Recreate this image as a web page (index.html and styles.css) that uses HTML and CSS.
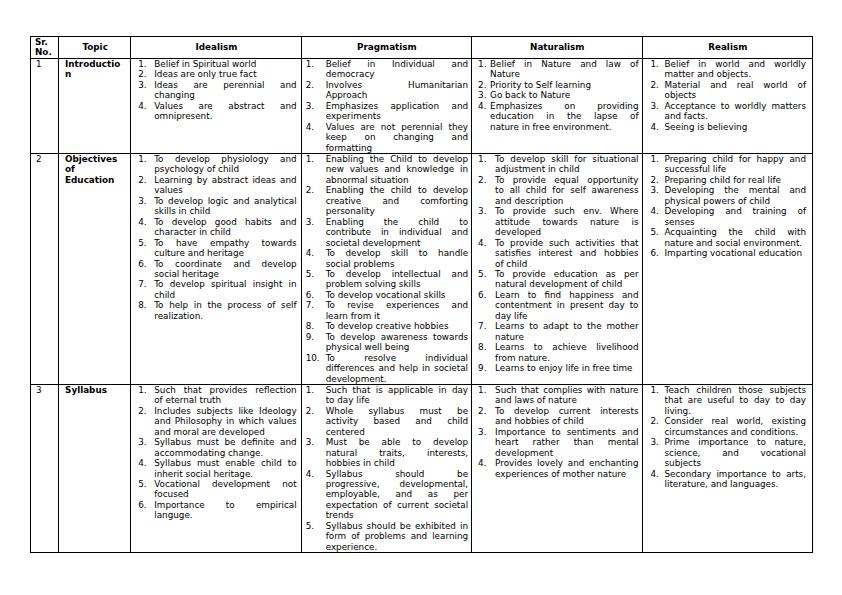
FILE: index.html
```html
<!DOCTYPE html>
<html>
<head>
<meta charset="utf-8">
<link rel="stylesheet" href="styles.css">
</head>
<body>
<table class="grid">
  <colgroup>
    <col class="c-sr"><col class="c-topic"><col class="c-main"><col class="c-main"><col class="c-main"><col class="c-main">
  </colgroup>
  <thead>
    <tr>
      <th class="h-sr">Sr.<br>No.</th>
      <th>Topic</th>
      <th>Idealism</th>
      <th>Pragmatism</th>
      <th>Naturalism</th>
      <th>Realism</th>
    </tr>
  </thead>
  <tbody>
    <tr>
      <td class="sr">1</td>
      <td class="topic">Introduction</td>
      <td class="ideal"><ol>
        <li><span class="n">1.</span><span class="t"><span class="l">Belief in Spiritual world</span></span></li>
        <li><span class="n">2.</span><span class="t"><span class="l">Ideas are only true fact</span></span></li>
        <li><span class="n">3.</span><span class="t"><span class="l">Ideas are perennial and</span><span class="l">changing</span></span></li>
        <li><span class="n">4.</span><span class="t"><span class="l">Values are abstract and</span><span class="l">omnipresent.</span></span></li>
      </ol></td>
      <td class="prag"><ol>
        <li><span class="n">1.</span><span class="t"><span class="l">Belief in Individual and</span><span class="l">democracy</span></span></li>
        <li><span class="n">2.</span><span class="t"><span class="l">Involves Humanitarian</span><span class="l">Approach</span></span></li>
        <li><span class="n">3.</span><span class="t"><span class="l">Emphasizes application and</span><span class="l">experiments</span></span></li>
        <li><span class="n">4.</span><span class="t"><span class="l">Values are not perennial they</span><span class="l">keep on changing and</span><span class="l">formatting</span></span></li>
      </ol></td>
      <td class="nat nat-narrow"><ol>
        <li><span class="n">1.</span><span class="t"><span class="l">Belief in Nature and law of</span><span class="l">Nature</span></span></li>
        <li><span class="n">2.</span><span class="t"><span class="l">Priority to Self learning</span></span></li>
        <li><span class="n">3.</span><span class="t"><span class="l">Go back to Nature</span></span></li>
        <li><span class="n">4.</span><span class="t"><span class="l">Emphasizes on providing</span><span class="l">education in the lapse of</span><span class="l">nature in free environment.</span></span></li>
      </ol></td>
      <td class="real"><ol>
        <li><span class="n">1.</span><span class="t"><span class="l">Belief in world and worldly</span><span class="l">matter and objects.</span></span></li>
        <li><span class="n">2.</span><span class="t"><span class="l">Material and real world of</span><span class="l">objects</span></span></li>
        <li><span class="n">3.</span><span class="t"><span class="l">Acceptance to worldly matters</span><span class="l">and facts.</span></span></li>
        <li><span class="n">4.</span><span class="t"><span class="l">Seeing is believing</span></span></li>
      </ol></td>
    </tr>
    <tr>
      <td class="sr">2</td>
      <td class="topic">Objectives of Education</td>
      <td class="ideal"><ol>
        <li><span class="n">1.</span><span class="t"><span class="l">To develop physiology and</span><span class="l">psychology of child</span></span></li>
        <li><span class="n">2.</span><span class="t"><span class="l">Learning by abstract ideas and</span><span class="l">values</span></span></li>
        <li><span class="n">3.</span><span class="t"><span class="l">To develop logic and analytical</span><span class="l">skills in child</span></span></li>
        <li><span class="n">4.</span><span class="t"><span class="l">To develop good habits and</span><span class="l">character in child</span></span></li>
        <li><span class="n">5.</span><span class="t"><span class="l">To have empathy towards</span><span class="l">culture and heritage</span></span></li>
        <li><span class="n">6.</span><span class="t"><span class="l">To coordinate and develop</span><span class="l">social heritage</span></span></li>
        <li><span class="n">7.</span><span class="t"><span class="l">To develop spiritual insight in</span><span class="l">child</span></span></li>
        <li><span class="n">8.</span><span class="t"><span class="l">To help in the process of self</span><span class="l">realization.</span></span></li>
      </ol></td>
      <td class="prag"><ol>
        <li><span class="n">1.</span><span class="t"><span class="l">Enabling the Child to develop</span><span class="l">new values and knowledge in</span><span class="l">abnormal situation</span></span></li>
        <li><span class="n">2.</span><span class="t"><span class="l">Enabling the child to develop</span><span class="l">creative and comforting</span><span class="l">personality</span></span></li>
        <li><span class="n">3.</span><span class="t"><span class="l">Enabling the child to</span><span class="l">contribute in individual and</span><span class="l">societal development</span></span></li>
        <li><span class="n">4.</span><span class="t"><span class="l">To develop skill to handle</span><span class="l">social problems</span></span></li>
        <li><span class="n">5.</span><span class="t"><span class="l">To develop intellectual and</span><span class="l">problem solving skills</span></span></li>
        <li><span class="n">6.</span><span class="t"><span class="l">To develop vocational skills</span></span></li>
        <li><span class="n">7.</span><span class="t"><span class="l">To revise experiences and</span><span class="l">learn from it</span></span></li>
        <li><span class="n">8.</span><span class="t"><span class="l">To develop creative hobbies</span></span></li>
        <li><span class="n">9.</span><span class="t"><span class="l">To develop awareness towards</span><span class="l">physical well being</span></span></li>
        <li><span class="n">10.</span><span class="t"><span class="l">To resolve individual</span><span class="l">differences and help in societal</span><span class="l">development.</span></span></li>
      </ol></td>
      <td class="nat"><ol>
        <li><span class="n">1.</span><span class="t"><span class="l">To develop skill for situational</span><span class="l">adjustment in child</span></span></li>
        <li><span class="n">2.</span><span class="t"><span class="l">To provide equal opportunity</span><span class="l">to all child for self awareness</span><span class="l">and description</span></span></li>
        <li><span class="n">3.</span><span class="t"><span class="l">To provide such env. Where</span><span class="l">attitude towards nature is</span><span class="l">developed</span></span></li>
        <li><span class="n">4.</span><span class="t"><span class="l">To provide such activities that</span><span class="l">satisfies interest and hobbies</span><span class="l">of child</span></span></li>
        <li><span class="n">5.</span><span class="t"><span class="l">To provide education as per</span><span class="l">natural development of child</span></span></li>
        <li><span class="n">6.</span><span class="t"><span class="l">Learn to find happiness and</span><span class="l">contentment in present day to</span><span class="l">day life</span></span></li>
        <li><span class="n">7.</span><span class="t"><span class="l">Learns to adapt to the mother</span><span class="l">nature</span></span></li>
        <li><span class="n">8.</span><span class="t"><span class="l">Learns to achieve livelihood</span><span class="l">from nature.</span></span></li>
        <li><span class="n">9.</span><span class="t"><span class="l">Learns to enjoy life in free time</span></span></li>
      </ol></td>
      <td class="real"><ol>
        <li><span class="n">1.</span><span class="t"><span class="l">Preparing child for happy and</span><span class="l">successful life</span></span></li>
        <li><span class="n">2.</span><span class="t"><span class="l">Preparing child for real life</span></span></li>
        <li><span class="n">3.</span><span class="t"><span class="l">Developing the mental and</span><span class="l">physical powers of child</span></span></li>
        <li><span class="n">4.</span><span class="t"><span class="l">Developing and training of</span><span class="l">senses</span></span></li>
        <li><span class="n">5.</span><span class="t"><span class="l">Acquainting the child with</span><span class="l">nature and social environment.</span></span></li>
        <li><span class="n">6.</span><span class="t"><span class="l">Imparting vocational education</span></span></li>
      </ol></td>
    </tr>
    <tr>
      <td class="sr">3</td>
      <td class="topic">Syllabus</td>
      <td class="ideal"><ol>
        <li><span class="n">1.</span><span class="t"><span class="l">Such that provides reflection</span><span class="l">of eternal truth</span></span></li>
        <li><span class="n">2.</span><span class="t"><span class="l">Includes subjects like Ideology</span><span class="l">and Philosophy in which values</span><span class="l">and moral are developed</span></span></li>
        <li><span class="n">3.</span><span class="t"><span class="l">Syllabus must be definite and</span><span class="l">accommodating change.</span></span></li>
        <li><span class="n">4.</span><span class="t"><span class="l">Syllabus must enable child to</span><span class="l">inherit social heritage.</span></span></li>
        <li><span class="n">5.</span><span class="t"><span class="l">Vocational development not</span><span class="l">focused</span></span></li>
        <li><span class="n">6.</span><span class="t"><span class="l">Importance to empirical</span><span class="l">languge.</span></span></li>
      </ol></td>
      <td class="prag"><ol>
        <li><span class="n">1.</span><span class="t"><span class="l">Such that is applicable in day</span><span class="l">to day life</span></span></li>
        <li><span class="n">2.</span><span class="t"><span class="l">Whole syllabus must be</span><span class="l">activity based and child</span><span class="l">centered</span></span></li>
        <li><span class="n">3.</span><span class="t"><span class="l">Must be able to develop</span><span class="l">natural traits, interests,</span><span class="l">hobbies in child</span></span></li>
        <li><span class="n">4.</span><span class="t"><span class="l">Syllabus should be</span><span class="l">progressive, developmental,</span><span class="l">employable, and as per</span><span class="l">expectation of current societal</span><span class="l">trends</span></span></li>
        <li><span class="n">5.</span><span class="t"><span class="l">Syllabus should be exhibited in</span><span class="l">form of problems and learning</span><span class="l">experience.</span></span></li>
      </ol></td>
      <td class="nat"><ol>
        <li><span class="n">1.</span><span class="t"><span class="l">Such that complies with nature</span><span class="l">and laws of nature</span></span></li>
        <li><span class="n">2.</span><span class="t"><span class="l">To develop current interests</span><span class="l">and hobbies of child</span></span></li>
        <li><span class="n">3.</span><span class="t"><span class="l">Importance to sentiments and</span><span class="l">heart rather than mental</span><span class="l">development</span></span></li>
        <li><span class="n">4.</span><span class="t"><span class="l">Provides lovely and enchanting</span><span class="l">experiences of mother nature</span></span></li>
      </ol></td>
      <td class="real"><ol>
        <li><span class="n">1.</span><span class="t"><span class="l">Teach children those subjects</span><span class="l">that are useful to day to day</span><span class="l">living.</span></span></li>
        <li><span class="n">2.</span><span class="t"><span class="l">Consider real world, existing</span><span class="l">circumstances and conditions.</span></span></li>
        <li><span class="n">3.</span><span class="t"><span class="l">Prime importance to nature,</span><span class="l">science, and vocational</span><span class="l">subjects</span></span></li>
        <li><span class="n">4.</span><span class="t"><span class="l">Secondary importance to arts,</span><span class="l">literature, and languages.</span></span></li>
      </ol></td>
    </tr>
  </tbody>
</table>
</body>
</html>
```
FILE: styles.css
```css
html, body {
  background: #ffffff;
}
body {
  margin: 36px 0 0 30px;
  font-family: "DejaVu Sans", Verdana, sans-serif;
  font-size: 8.8px;
  line-height: 10.45px;
  color: #000000;
}
.grid {
  border-collapse: collapse;
  table-layout: fixed;
  width: 783px;
}
.c-sr { width: 28px; }
.c-topic { width: 72px; }
.c-main { width: 170px; }
.grid th,
.grid td {
  border: 1px solid #000000;
  padding: 0 4px 0 5px;
  vertical-align: top;
  text-align: left;
}
.grid th {
  font-weight: bold;
  text-align: center;
  vertical-align: middle;
}
.grid th.h-sr {
  text-align: left;
  padding-left: 4px;
}
.sr {
  padding-left: 4px;
}
.grid td.topic {
  font-weight: bold;
  padding-left: 6px;
  padding-right: 8px;
  overflow-wrap: anywhere;
}
ol {
  list-style: none;
  margin: 0;
  padding: 0;
}
li {
  display: flex;
}
.n {
  flex: none;
}
.t {
  flex: 1;
  min-width: 0;
}
.l {
  display: block;
  text-align: justify;
  text-align-last: justify;
}
.l:last-child {
  text-align-last: left;
}
.grid td.ideal { padding-left: 7px; padding-right: 4px; }
.ideal .n { width: 16px; }
.grid td.prag { padding-left: 4px; padding-right: 3px; }
.prag .n { width: 20px; }
.grid td.nat { padding-left: 6px; padding-right: 3px; }
.nat .n { width: 17px; }
.nat-narrow .n { width: 12px; }
.grid td.real { padding-left: 8px; padding-right: 6px; }
.real .n { width: 14px; }
```
